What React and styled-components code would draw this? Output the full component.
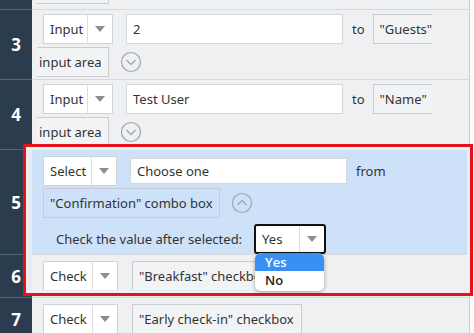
import React from 'react'
import styled, { createGlobalStyle } from 'styled-components'

const Global = createGlobalStyle`
  html, body {
    margin: 0;
    padding: 0;
    background: #fafbfc;
    overflow: hidden;
  }
  body {
    font-family: 'Noto Sans', 'Open Sans', sans-serif;
    font-size: 13px;
    color: #333;
  }
`

const Screen = styled.div`
  width: 474px;
  height: 333px;
  overflow: hidden;
`

const List = styled.div`
  width: 469px;
  margin-top: -63px;
  border-right: 1px solid #c9cdd2;
  background: #eef0f2;
`

const Row = styled.div`
  position: relative;
  display: flex;
  border-bottom: 1px solid #d6d9dd;
  background: ${p => (p.$active ? '#cde1f8' : '#eef0f2')};
`

const Num = styled.div`
  width: 32px;
  flex: none;
  display: flex;
  align-items: center;
  justify-content: center;
  background: #2c3c4f;
  color: #fff;
  font-family: 'Open Sans', sans-serif;
  font-weight: 700;
  font-size: 17px;
  margin-bottom: -1px;
  border-bottom: 1px solid #55677b;
`

const Body = styled.div`
  flex: 1;
  min-width: 0;
  display: flex;
  flex-direction: column;
  gap: ${p => p.$gap ?? 3}px;
  padding: ${p => p.$pad || '4px 0 2px 0'};
`

const Line = styled.div`
  display: flex;
  align-items: center;
  height: 30px;
  margin-top: ${p => p.$mt || 0}px;
`

const SelectBox = styled.div`
  display: flex;
  height: 30px;
  margin-left: ${p => p.$ml ?? 11}px;
  background: #fff;
  border: ${p => (p.$focus ? '2px solid #111' : '1px solid #cfd3d7')};
  border-radius: ${p => (p.$focus ? '3px' : '1px')};
  box-sizing: border-box;
  flex: none;
`

const SelectLabel = styled.span`
  display: flex;
  align-items: center;
  padding: 0 6px;
  width: ${p => p.$w}px;
  box-sizing: border-box;
  white-space: nowrap;
`

const Arrow = styled.span`
  width: 24px;
  display: flex;
  align-items: center;
  justify-content: center;
  border-left: 1px solid #dcdfe2;
  &::after {
    content: '';
    border-left: 5px solid transparent;
    border-right: 5px solid transparent;
    border-top: 6px solid #8a8d91;
  }
`

const TextInput = styled.div`
  width: 217px;
  height: ${p => p.$h || 30}px;
  margin-left: 13px;
  padding: 0 6px;
  box-sizing: border-box;
  display: flex;
  align-items: center;
  background: #fff;
  border: 1px solid #d3d6da;
  flex: none;
`

const Word = styled.span`
  margin: 0 8px 0 9px;
`

const Tag = styled.div`
  height: 30px;
  display: flex;
  align-items: center;
  padding: 0 6px;
  box-sizing: border-box;
  flex: none;
  white-space: nowrap;
  background: ${p => (p.$blue ? '#cde1f8' : '#f2f3f4')};
  border: 1px solid #c9cdd1;
  ${p => p.$clipLeft && 'border-left: none; padding-left: 2px; margin-left: 5px;'}
  ${p => p.$clipRight && 'border-right: none; padding-right: 0; width: 59px; overflow: hidden;'}
  ${p => p.$ml && `margin-left: ${p.$ml}px;`}
  ${p => p.$w && `width: ${p.$w}px; overflow: hidden;`}
`

const Toggle = styled.svg`
  margin-left: ${p => p.$ml || 11}px;
  flex: none;
`

const Caption = styled.span`
  margin: 0 12px 0 24px;
`

const Drop = styled.div`
  position: absolute;
  z-index: 3;
  left: 255px;
  top: 103px;
  width: 69px;
  padding-bottom: 2px;
  background: #fff;
  border-radius: 6px;
  box-shadow: 0 1px 4px rgba(0, 0, 0, 0.35);
  overflow: hidden;
  font-family: 'Open Sans', sans-serif;
  font-size: 13px;
`

const Option = styled.div`
  height: 18px;
  line-height: 18px;
  padding: 0 10px;
  font-weight: 600;
  background: ${p => (p.$on ? '#3a8ff2' : '#fff')};
  color: ${p => (p.$on ? '#fff' : '#222')};
`

const Highlight = styled.div`
  position: absolute;
  z-index: 2;
  pointer-events: none;
  left: 23px;
  top: -6px;
  width: 450px;
  height: 152px;
  box-sizing: border-box;
  border: 3px solid #e3121b;
  box-shadow: inset 0 0 0 3px rgba(238, 241, 244, 0.85), inset 6px 0 0 0 #e6ebf1;
`

const Chevron = ({ up, ml }) => (
  <Toggle $ml={ml} width="22" height="22" viewBox="0 0 22 22">
    <circle cx="11" cy="11" r="9.5" fill="none" stroke="#a2a6ab" strokeWidth="1.2" />
    <path
      d={up ? 'M6.5 13 L11 8.5 L15.5 13' : 'M6.5 9 L11 13.5 L15.5 9'}
      fill="none"
      stroke="#a2a6ab"
      strokeWidth="1.3"
    />
  </Toggle>
)

const Select = ({ label, w, focus, ml }) => (
  <SelectBox $focus={focus} $ml={ml}>
    <SelectLabel $w={w}>{label}</SelectLabel>
    <Arrow />
  </SelectBox>
)

const InputRow = ({ n, value, target, first }) => (
  <Row>
    <Num>{n}</Num>
    <Body $pad={first ? '4px 0 5px 0' : undefined}>
      <Line>
        <Select label="Input" w={43} />
        <TextInput>{value}</TextInput>
        <Word>to</Word>
        <Tag $clipRight>{target}</Tag>
      </Line>
      <Line>
        <Tag $clipLeft>input area</Tag>
        <Chevron />
      </Line>
    </Body>
  </Row>
)

const CheckRow = ({ n, label }) => (
  <Row>
    <Num>{n}</Num>
    <Body $pad="6px 0 6px 0">
      <Line>
        <Select label="Check" w={48} />
        <Tag $ml={14} $w={170}>{label}</Tag>
      </Line>
    </Body>
  </Row>
)

export default function App() {
  return (
    <Screen>
      <Global />
      <List>
        <InputRow n={2} value="" target={'"Date"'} first />
        <InputRow n={3} value="2" target={'"Guests"'} />
        <InputRow n={4} value="Test User" target={'"Name"'} />
        <Row $active>
          <Num>5</Num>
          <Body $pad="6px 0 0 0" $gap={2}>
            <Line>
              <Select label="Select" w={47} />
              <TextInput $h={26}>Choose one</TextInput>
              <Word>from</Word>
            </Line>
            <Line>
              <Tag $blue $ml={11}>"Confirmation" combo box</Tag>
              <Chevron up ml={11} />
            </Line>
            <Line $mt={4}>
              <Caption>Check the value after selected:</Caption>
              <Select label="Yes" w={43} focus ml={0} />
            </Line>
          </Body>
          <Highlight />
          <Drop>
            <Option $on>Yes</Option>
            <Option>No</Option>
          </Drop>
        </Row>
        <CheckRow n={6} label={'"Breakfast" checkbox'} />
        <CheckRow n={7} label={'"Early check-in" checkbox'} />
      </List>
    </Screen>
  )
}
